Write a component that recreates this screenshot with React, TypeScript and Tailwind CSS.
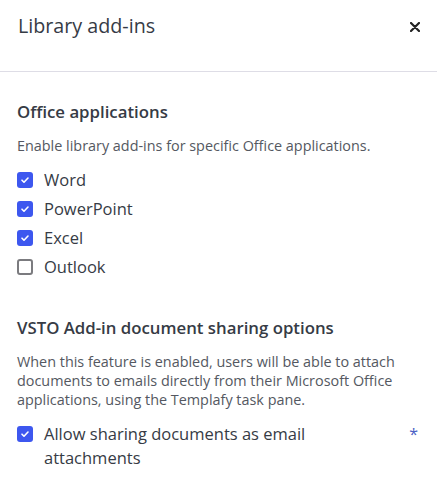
import { useState } from "react";

const APPS = ["Word", "PowerPoint", "Excel", "Outlook"];

function Checkbox({ checked, onChange }: { checked: boolean; onChange: () => void }) {
  return (
    <button
      type="button"
      onClick={onChange}
      className={`w-4 h-4 shrink-0 rounded-[3px] flex items-center justify-center ${
        checked ? "bg-[#3d57ef]" : "border-2 border-[#7b7b7f] bg-white"
      }`}
    >
      {checked && (
        <svg width="10" height="10" viewBox="0 0 10 10" fill="none">
          <path d="M2 5.2l2 2 4-4.2" stroke="white" strokeWidth="1.6" strokeLinecap="round" strokeLinejoin="round" />
        </svg>
      )}
    </button>
  );
}

export default function App() {
  const [apps, setApps] = useState<Record<string, boolean>>({ Word: true, PowerPoint: true, Excel: true, Outlook: false });
  const [sharing, setSharing] = useState(true);

  return (
    <div className="w-[437px] min-h-[477px] bg-white text-[#363b45]" style={{ fontFamily: '"Open Sans", sans-serif' }}>
      {/* Header */}
      <div className="h-[72px] border-b border-[#dedde6] flex items-start justify-between pl-[18px] pr-[17px] pt-[12px]">
        <h2 className="text-[19.7px] leading-7">Library add-ins</h2>
        <button className="mt-[10px] text-[#222]">
          <svg width="10" height="10" viewBox="0 0 10 10">
            <path d="M1 1l8 8M9 1l-8 8" stroke="currentColor" strokeWidth="2.2" strokeLinecap="round" />
          </svg>
        </button>
      </div>

      <div className="px-[17px] pt-[28px] pb-2">
        {/* Office applications */}
        <h3 className="text-[16.8px] font-semibold leading-6">Office applications</h3>
        <p className="mt-[12px] text-[14.4px] leading-[19px] text-[#545861]">Enable library add-ins for specific Office applications.</p>
        <div className="mt-[13px] flex flex-col gap-[5px]">
          {APPS.map((a) => (
            <label key={a} className="flex items-center gap-[11px] h-6 text-[16.5px]">
              <Checkbox checked={apps[a]} onChange={() => setApps({ ...apps, [a]: !apps[a] })} />
              <span>{a}</span>
            </label>
          ))}
        </div>

        {/* VSTO */}
        <h3 className="mt-[37px] text-[16.8px] font-semibold leading-6">VSTO Add-in document sharing options</h3>
        <p className="mt-[12px] text-[14.4px] leading-[19px] text-[#545861]">
          When this feature is enabled, users will be able to attach documents to emails directly from their Microsoft Office applications, using the Templafy task pane.
        </p>
        <div className="mt-[13px] flex items-start">
          <div className="pt-1">
            <Checkbox checked={sharing} onChange={() => setSharing(!sharing)} />
          </div>
          <span className="ml-[11px] w-[310px] text-[16.5px] leading-6">Allow sharing documents as email attachments</span>
          <span className="ml-auto mr-[2px] text-[#4a60c4] text-base leading-6">*</span>
        </div>
      </div>
    </div>
  );
}
